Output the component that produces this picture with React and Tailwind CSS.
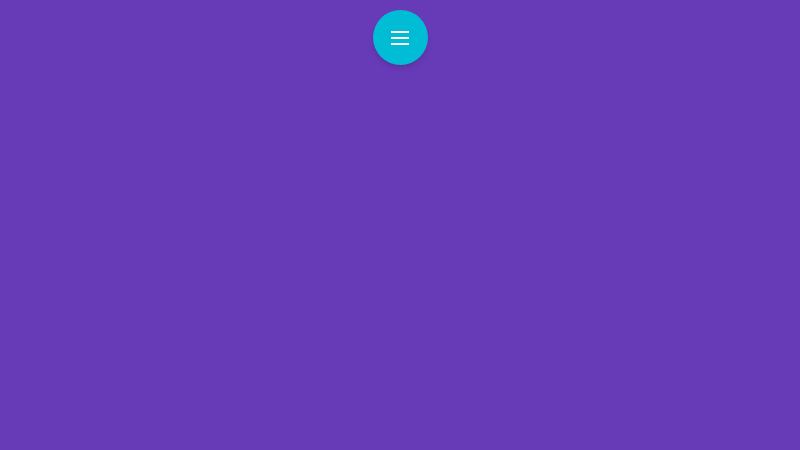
export default function App() {
  return (
    <div className="w-full h-[450px] bg-[#673ab7] flex justify-center">
      <button className="mt-[10px] w-[55px] h-[55px] rounded-full bg-[#00bcd4] shadow-md flex items-center justify-center">
        <svg width="18" height="14" viewBox="0 0 18 14" fill="none">
          <rect x="0" y="0" width="18" height="2" fill="#ffffff" />
          <rect x="0" y="6" width="18" height="2" fill="#ffffff" />
          <rect x="0" y="12" width="18" height="2" fill="#ffffff" />
        </svg>
      </button>
    </div>
  );
}
